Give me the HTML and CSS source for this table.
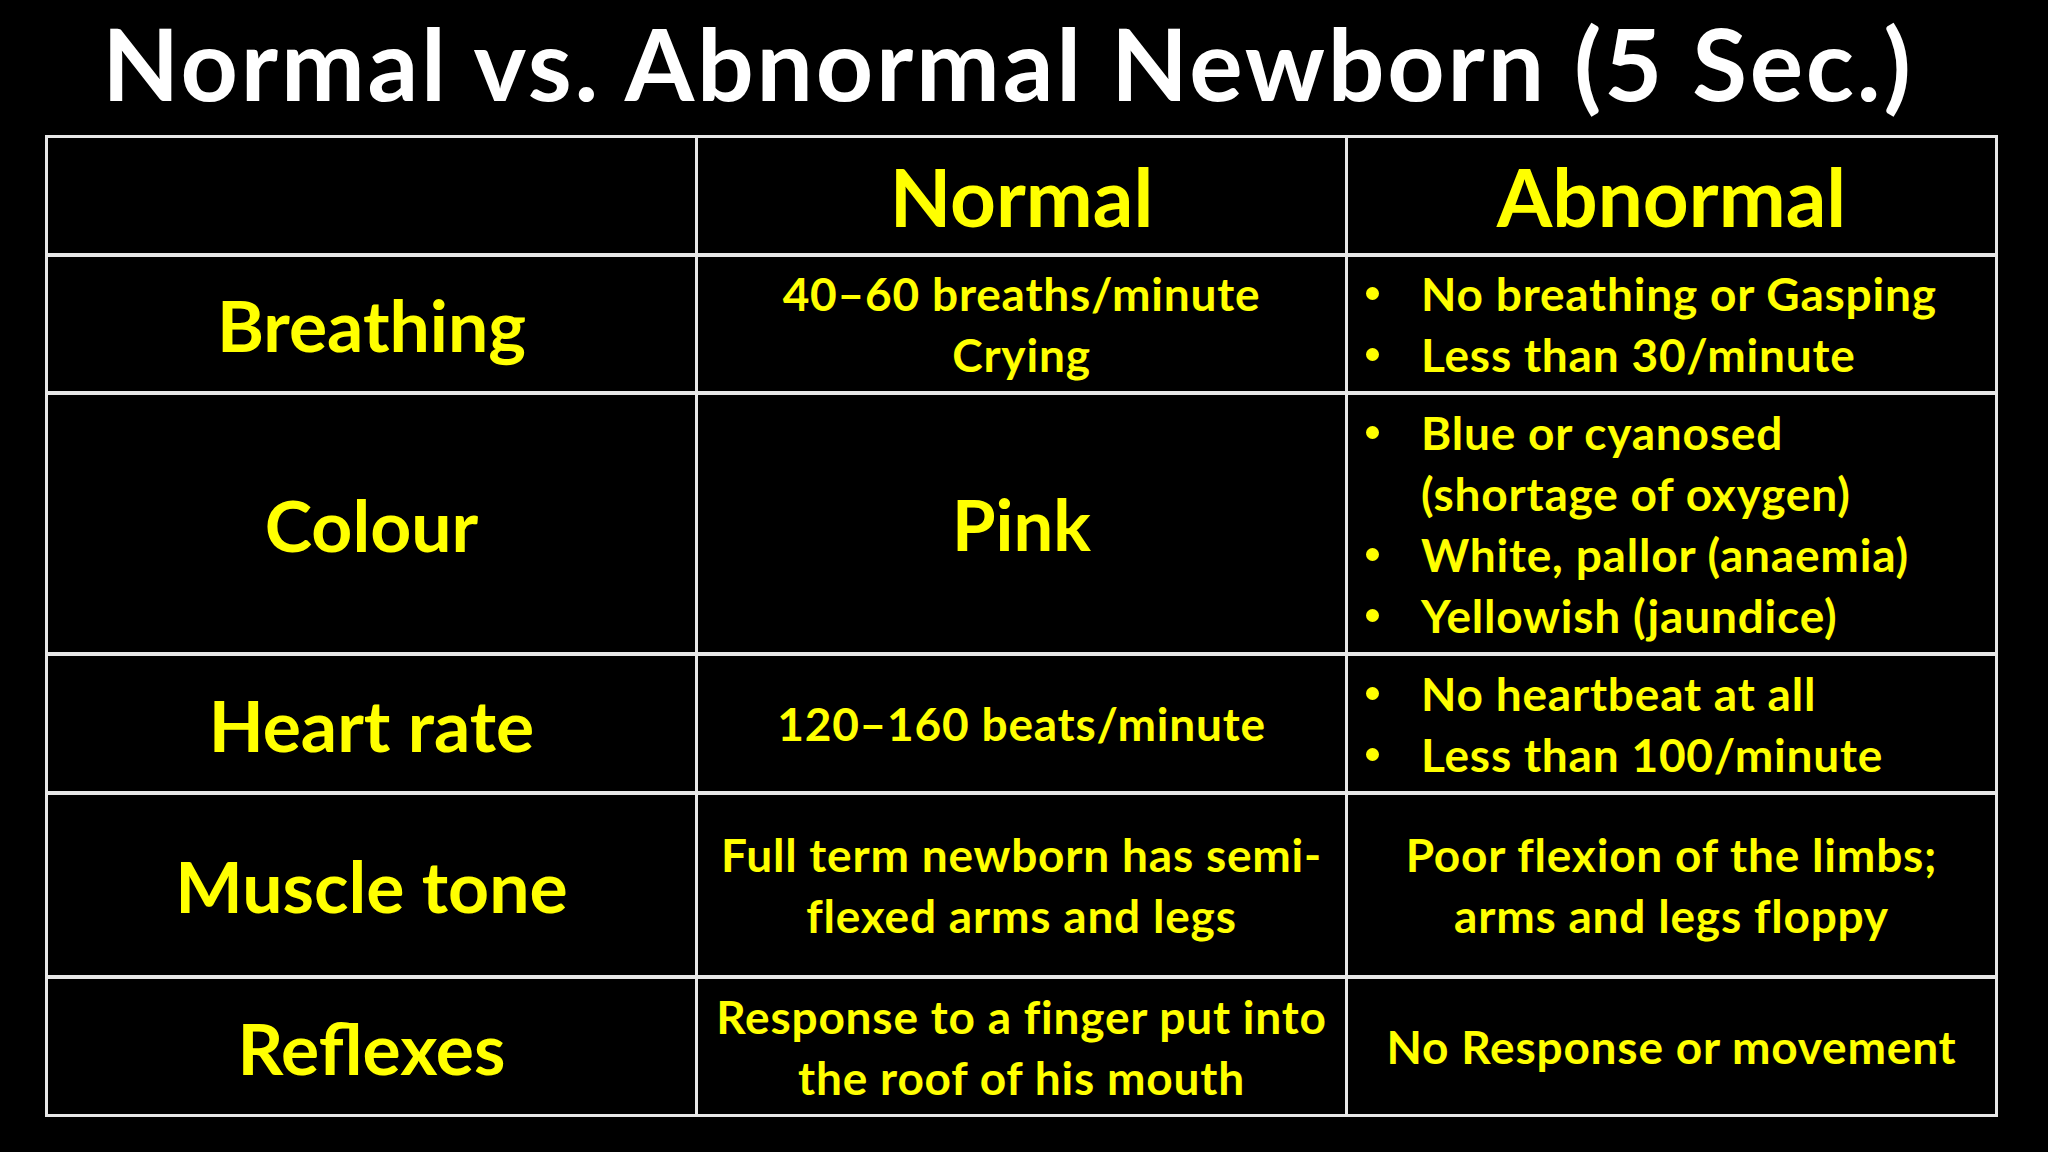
FILE: index.html
```html
<!DOCTYPE html>
<html lang="en">
<head>
<meta charset="utf-8">
<title>Normal vs. Abnormal Newborn (5 Sec.)</title>
<link rel="stylesheet" href="styles.css">
</head>
<body>
<main class="slide">
  <h1 class="title">Normal vs. Abnormal Newborn (5 Sec.)</h1>
  <div class="grid">
    <div class="cell"></div>
    <div class="cell head">Normal</div>
    <div class="cell head">Abnormal</div>

    <div class="cell label">Breathing</div>
    <div class="cell body">40–60 breaths/minute<br>Crying</div>
    <div class="cell list">
      <ul>
        <li>No breathing or Gasping</li>
        <li>Less than 30/minute</li>
      </ul>
    </div>

    <div class="cell label">Colour</div>
    <div class="cell big">Pink</div>
    <div class="cell list">
      <ul>
        <li>Blue or cyanosed<br>(shortage of oxygen)</li>
        <li>White, pallor (anaemia)</li>
        <li>Yellowish (jaundice)</li>
      </ul>
    </div>

    <div class="cell label">Heart rate</div>
    <div class="cell body">120–160 beats/minute</div>
    <div class="cell list">
      <ul>
        <li>No heartbeat at all</li>
        <li>Less than 100/minute</li>
      </ul>
    </div>

    <div class="cell label">Muscle tone</div>
    <div class="cell body">Full term newborn has semi-<br>flexed arms and legs</div>
    <div class="cell body">Poor flexion of the limbs;<br>arms and legs floppy</div>

    <div class="cell label">Reflexes</div>
    <div class="cell body">Response to a finger put into<br>the roof of his mouth</div>
    <div class="cell body">No Response or movement</div>
  </div>
</main>
</body>
</html>
```

FILE: styles.css
```css
html, body {
  margin: 0;
  padding: 0;
  background: #000;
}

.slide {
  width: 2048px;
  height: 1152px;
  background: #000;
  overflow: hidden;
}

.title {
  margin: 0 0 10px 0;
  padding-right: 32px;
  height: 125px;
  line-height: 125px;
  text-align: center;
  color: #fff;
  font-family: "Lato", "DejaVu Sans", sans-serif;
  font-weight: 700;
  font-size: 100px;
  letter-spacing: 2.8px;
  white-space: nowrap;
}

.grid {
  margin-left: 45px;
  width: 1953px;
  box-sizing: border-box;
  padding: 3px;
  background: #e8e8e8;
  display: grid;
  grid-template-columns: 647px 647px 647px;
  grid-template-rows: 115px 134px 257px 135px 180px 135px;
  column-gap: 3px;
  row-gap: 4px;
}

.cell {
  background: #000;
  color: #ffff00;
  font-family: "Lato", "Liberation Sans", sans-serif;
  font-weight: 700;
  display: flex;
  flex-direction: column;
  justify-content: center;
  align-items: center;
  text-align: center;
}

.head {
  font-size: 80px;
  line-height: 90px;
}

.label {
  font-size: 71.5px;
  line-height: 80px;
}

.big {
  font-size: 70.5px;
  line-height: 80px;
}

.body {
  font-size: 46px;
  letter-spacing: 0.8px;
  line-height: 61px;
}

.list {
  align-items: stretch;
  text-align: left;
  font-size: 46px;
  letter-spacing: 0.8px;
  line-height: 61px;
}

.list ul {
  margin: 0;
  padding: 0;
  list-style: none;
}

.list li {
  display: flex;
  align-items: flex-start;
}

.list li::before {
  content: "";
  flex: 0 0 13px;
  height: 13px;
  margin: 24px 42px 0 18px;
  border-radius: 50%;
  background: #ffff00;
}
```
